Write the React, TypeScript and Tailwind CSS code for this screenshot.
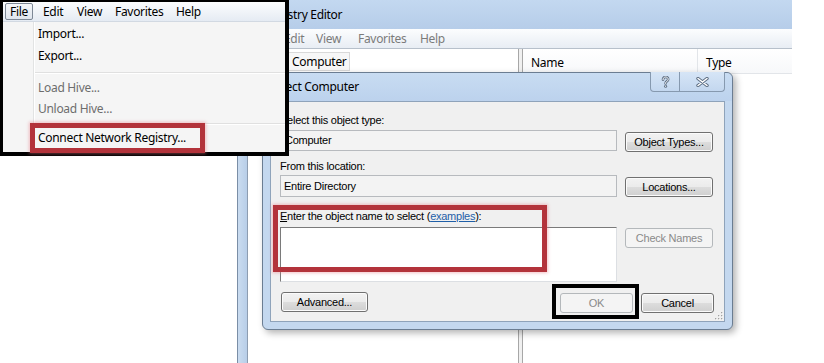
import React from "react";

const seg = "font-['Noto_Sans',sans-serif] text-[12px] tracking-[-0.3px]";
const ms = "font-['Liberation_Sans',Arial,sans-serif] text-[11px] tracking-[-0.25px]";
const btn =
  "h-[20px] shrink-0 flex items-center justify-center rounded-[3px] border border-[#707070] bg-[linear-gradient(#f2f2f2,#ebebeb_50%,#dddddd_50%,#cfcfcf)] shadow-[inset_0_0_0_1px_#fbfbfb] text-black";
const btnDis =
  "h-[20px] shrink-0 flex items-center justify-center rounded-[3px] border border-[#b4b8bb] bg-[#f4f4f4] text-[#8a8a8a]";

function HelpIcon() {
  return (
    <svg width="9" height="12" viewBox="0 0 9 12">
      <path d="M2 3.8C2 1.9 3.2 1 4.6 1C6 1 7.2 1.9 7.2 3.3C7.2 4.6 6.2 5.1 5.4 5.7C4.8 6.1 4.6 6.6 4.6 7.4" fill="none" stroke="#5d6e83" strokeWidth="2.6" strokeLinecap="round" />
      <circle cx="4.6" cy="10.2" r="1.5" fill="#5d6e83" />
      <path d="M2 3.8C2 1.9 3.2 1 4.6 1C6 1 7.2 1.9 7.2 3.3C7.2 4.6 6.2 5.1 5.4 5.7C4.8 6.1 4.6 6.6 4.6 7.4" fill="none" stroke="#ffffff" strokeWidth="1" strokeLinecap="round" />
      <circle cx="4.6" cy="10.2" r="0.6" fill="#ffffff" />
    </svg>
  );
}

function CloseIcon() {
  return (
    <svg width="13" height="10" viewBox="0 0 13 10">
      <path d="M2 1.5L11 8.5M11 1.5L2 8.5" stroke="#5d6e83" strokeWidth="3.4" strokeLinecap="round" />
      <path d="M2 1.5L11 8.5M11 1.5L2 8.5" stroke="#ffffff" strokeWidth="1.5" strokeLinecap="round" />
    </svg>
  );
}

function Grip() {
  return (
    <svg width="10" height="10" viewBox="0 0 10 10">
      {[
        [8, 2],
        [8, 5],
        [5, 5],
        [8, 8],
        [5, 8],
        [2, 8],
      ].map(([x, y], i) => (
        <g key={i}>
          <rect x={x + 0.6} y={y + 0.6} width="1.3" height="1.3" fill="#ffffff" />
          <rect x={x} y={y} width="1.3" height="1.3" fill="#a2a2a2" />
        </g>
      ))}
    </svg>
  );
}

function RegWindow() {
  return (
    <div className="w-[555px] h-full shrink-0 flex flex-col bg-[#c1d6ee] border-l border-[#7a8ea6]">
      <div className={`h-[29px] shrink-0 flex items-center pl-[26px] pt-[1px] bg-[linear-gradient(#c3d8f0,#b6cde9)] text-black ${seg}`}>
        Registry Editor
      </div>
      <div className="flex flex-1 min-h-0">
        <div className="w-[9px] shrink-0 bg-[linear-gradient(90deg,#cadcf0,#b8cee8)]" />
        <div className="flex-1 flex flex-col bg-white border-l border-[#8d9db1]">
          <div className={`h-[20px] shrink-0 flex items-center bg-[linear-gradient(#fcfdfe,#e8edf4)] border-b border-[#b7c0cb] text-[#7b7b7b] ${seg}`}>
            <span className="ml-[7px] w-[29px]">File</span>
            <span className="w-[32px]">Edit</span>
            <span className="w-[42px]">View</span>
            <span className="w-[62px]">Favorites</span>
            <span>Help</span>
          </div>
          <div className={`flex flex-1 min-h-0 ${seg}`}>
            <div className="w-[270px] shrink-0 pt-[3px] pl-[39px]">
              <div className="w-[63px] h-[19px] border border-[#d9d9d9] bg-[#f7f7f7] pl-[4px] flex items-center text-black">
                Computer
              </div>
            </div>
            <div className="w-[5px] shrink-0 border-x border-[#a7a7a7] bg-[#f0f0f0]" />
            <div className="flex-1 flex flex-col">
              <div className="h-[25px] shrink-0 flex border-b border-[#e2e5e9] bg-[linear-gradient(#ffffff,#f7f8fa)] text-black">
                <div className="w-[175px] shrink-0 border-r border-[#e2e5e9] pl-[8px] pt-[3px] flex items-center">Name</div>
                <div className="pl-[8px] pt-[3px] flex items-center">Type</div>
              </div>
            </div>
          </div>
        </div>
      </div>
    </div>
  );
}

function Dialog() {
  return (
    <div className="absolute left-[262px] top-[72px] w-[471px] h-[258px] rounded-[6px] border border-[#6b7d92] bg-[#c4d8ef] shadow-[3px_3px_7px_rgba(0,0,0,0.3)] flex flex-col">
      <div className="h-[28px] shrink-0 flex items-center pl-[7px] relative rounded-t-[6px] bg-[linear-gradient(#c8dcf2,#bcd2ed)]">
        <span className={`text-black ${seg}`}>Select Computer</span>
        <div className="absolute right-[7px] top-[-1px] w-[75px] h-[20px] flex border border-t-0 border-[#8699af] rounded-b-[4px] overflow-hidden bg-[linear-gradient(#d6e5f6,#c3d7ef)]">
          <div className="w-[29px] shrink-0 flex items-center justify-center border-r border-[#8699af]">
            <HelpIcon />
          </div>
          <div className="flex-1 flex items-center justify-center">
            <CloseIcon />
          </div>
        </div>
      </div>
      <div className={`mx-[7px] mb-[7px] flex-1 border border-[#8fa3ba] bg-[#f0f0f0] relative pl-[9px] pr-[10px] flex flex-col text-black ${ms}`}>
        <div className="mt-[12px] h-[13px] leading-[13px]">Select this object type:</div>
        <div className="mt-[3px] flex gap-[8px] items-start">
          <div className="w-[337px] h-[21px] border border-[#b7babe] bg-[#f3f3f3] pl-[4px] flex items-center">Computer</div>
          <div className={`w-[88px] mt-[2px] ${btn}`}>Object Types...</div>
        </div>
        <div className="mt-[8px] h-[13px] leading-[13px]">From this location:</div>
        <div className="mt-[2px] flex gap-[8px] items-start">
          <div className="w-[337px] h-[22px] border border-[#b7babe] bg-[#f3f3f3] pl-[3px] flex items-center">Entire Directory</div>
          <div className={`w-[88px] mt-[2px] ${btn}`}>Locations...</div>
        </div>
        <div className="mt-[13px] h-[13px] leading-[13px]">
          <span className="underline">E</span>nter the object name to select (
          <span className="text-[#1f5fa8] underline">examples</span>):
        </div>
        <div className="mt-[4px] flex gap-[8px] items-start">
          <div className="w-[337px] h-[55px] bg-white border border-t-[#7a7a7a] border-l-[#7a7a7a] border-r-[#dcdfe3] border-b-[#dcdfe3]" />
          <div className={`w-[88px] mt-[1px] ${btnDis}`}>Check Names</div>
        </div>
        <div className="mt-[10px] flex items-start">
          <div className={`ml-[1px] w-[87px] ${btn}`}>Advanced...</div>
          <div className="flex-1" />
          <div className={`w-[73px] mt-[1px] ${btnDis}`}>OK</div>
          <div className={`w-[73px] ml-[8px] mt-[1px] ${btn}`}>Cancel</div>
        </div>
        <div className="absolute right-[1px] bottom-[1px]">
          <Grip />
        </div>
      </div>
    </div>
  );
}

function FileMenu() {
  return (
    <div className={`absolute left-0 top-0 w-[289px] h-[156px] border-l-[3px] border-t-[2px] border-r-[4px] border-b-[4px] border-black bg-[#f5f5f5] flex flex-col text-black ${seg}`}>
      <div className="h-[20px] shrink-0 flex items-center bg-[linear-gradient(#fcfdfe,#e5ebf3)] border-b border-[#d2d9e2]">
        <div className="ml-[2px] w-[28px] h-[17px] shrink-0 rounded-[2px] border border-[#7d8896] bg-[linear-gradient(#f5f7fa,#dfe5ed)] pl-[4px] flex items-center">
          File
        </div>
        <span className="ml-[10px] w-[34px] shrink-0">Edit</span>
        <span className="w-[38px] shrink-0">View</span>
        <span className="w-[61px] shrink-0">Favorites</span>
        <span>Help</span>
      </div>
      <div className="flex flex-1 min-h-0">
        <div className="w-[31px] shrink-0 border-r border-[#e2e3e3]" />
        <div className="flex-1 border-l border-white flex flex-col pt-[1px]">
          <div className="h-[22px] pl-[3px] flex items-center">Import...</div>
          <div className="h-[22px] pl-[3px] flex items-center">Export...</div>
          <div className="h-[10px] pt-[5px]">
            <div className="h-px bg-[#e0e0e0]" />
            <div className="h-px bg-white" />
          </div>
          <div className="h-[21px] pl-[3px] flex items-center text-[#6d6d6d]">Load Hive...</div>
          <div className="h-[21px] pl-[3px] flex items-center text-[#6d6d6d]">Unload Hive...</div>
          <div className="h-[8px] pt-[4px]">
            <div className="h-px bg-[#e0e0e0]" />
            <div className="h-px bg-white" />
          </div>
          <div className="h-[22px] pl-[3px] flex items-center">Connect Network Registry...</div>
        </div>
      </div>
    </div>
  );
}

export default function App() {
  return (
    <div className="relative w-[824px] h-[363px] overflow-hidden bg-white">
      <div className="flex h-full">
        <div className="w-[237px] shrink-0" />
        <RegWindow />
      </div>
      <Dialog />
      <div className="absolute left-[273px] top-[205px] w-[274px] h-[67px] border-[5px] border-[#b3333b] shadow-[0_0_3px_1px_rgba(230,120,130,0.45)]" />
      <div className="absolute left-[552px] top-[284px] w-[87px] h-[35px] border-[4px] border-black" />
      <FileMenu />
      <div className="absolute left-[30px] top-[123px] w-[175px] h-[30px] border-[5px] border-[#b3333b] shadow-[0_0_3px_1px_rgba(230,120,130,0.45)]" />
    </div>
  );
}
